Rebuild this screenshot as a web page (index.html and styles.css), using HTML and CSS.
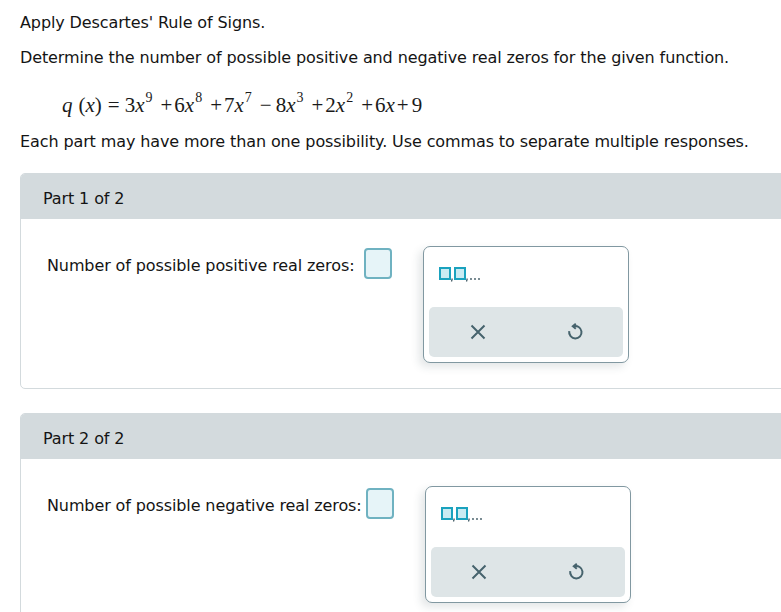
FILE: index.html
```html
<!DOCTYPE html>
<html>
<head>
<meta charset="utf-8">
<link rel="stylesheet" href="styles.css">
</head>
<body>
<main class="page">
  <p class="line l1">Apply Descartes' Rule of Signs.</p>
  <p class="line l2">Determine the number of possible positive and negative real zeros for the given function.</p>
  <div class="math"><span class="mi">q</span><span class="par">(</span><span class="mi">x</span><span class="par rp">)</span><span class="eq">=</span>3<span class="mi">x</span><sup>9</sup><span class="op">+</span>6<span class="mi">x</span><sup>8</sup><span class="op">+</span>7<span class="mi">x</span><sup>7</sup><span class="op minus">−</span>8<span class="mi">x</span><sup>3</sup><span class="op">+</span>2<span class="mi">x</span><sup>2</sup><span class="op">+</span>6<span class="mi">x</span><span class="op tight">+</span>9</div>
  <p class="line l3">Each part may have more than one possibility. Use commas to separate multiple responses.</p>

  <section class="card">
    <div class="card-head">Part 1 of 2</div>
    <div class="card-body">
      <span class="label label-pos">Number of possible positive real zeros:</span>
      <span class="answer"></span>
      <div class="pad">
        <div class="pad-top">
          <svg class="multi" width="44" height="16" viewBox="0 0 44 16">
            <rect x="2" y="2" width="10" height="11" fill="#c9ebf2" stroke="#1aa2be" stroke-width="2"/>
            <path d="M14.3 12.5 L13.5 15.5" stroke="#3b5560" stroke-width="1.2"/>
            <rect x="17" y="2" width="10" height="11" fill="#c9ebf2" stroke="#1aa2be" stroke-width="2"/>
            <path d="M29.3 12.5 L28.5 15.5" stroke="#3b5560" stroke-width="1.2"/>
            <circle cx="33" cy="13" r="0.9" fill="#3b5560"/>
            <circle cx="37" cy="13" r="0.9" fill="#3b5560"/>
            <circle cx="41" cy="13" r="0.9" fill="#3b5560"/>
          </svg>
        </div>
        <div class="toolbar">
          <span class="tool">
            <svg width="16" height="16" viewBox="0 0 16 16"><path d="M1.5 1.5 L14.5 14.5 M14.5 1.5 L1.5 14.5" stroke="#46636d" stroke-width="2" fill="none"/></svg>
          </span>
          <span class="tool">
            <svg width="18" height="18" viewBox="0 0 18 18"><path d="M7.5 3.3 A6.2 6.2 0 1 1 3.2 8.2" stroke="#46636d" stroke-width="2" fill="none"/><path d="M9.8 0.8 L6.8 3.3 L9.8 5.8" stroke="#46636d" stroke-width="2" fill="none" stroke-linejoin="miter"/></svg>
          </span>
        </div>
      </div>
    </div>
  </section>

  <section class="card card-2">
    <div class="card-head">Part 2 of 2</div>
    <div class="card-body">
      <span class="label label-neg">Number of possible negative real zeros:</span>
      <span class="answer"></span>
      <div class="pad">
        <div class="pad-top">
          <svg class="multi" width="44" height="16" viewBox="0 0 44 16">
            <rect x="2" y="2" width="10" height="11" fill="#c9ebf2" stroke="#1aa2be" stroke-width="2"/>
            <path d="M14.3 12.5 L13.5 15.5" stroke="#3b5560" stroke-width="1.2"/>
            <rect x="17" y="2" width="10" height="11" fill="#c9ebf2" stroke="#1aa2be" stroke-width="2"/>
            <path d="M29.3 12.5 L28.5 15.5" stroke="#3b5560" stroke-width="1.2"/>
            <circle cx="33" cy="13" r="0.9" fill="#3b5560"/>
            <circle cx="37" cy="13" r="0.9" fill="#3b5560"/>
            <circle cx="41" cy="13" r="0.9" fill="#3b5560"/>
          </svg>
        </div>
        <div class="toolbar">
          <span class="tool">
            <svg width="16" height="16" viewBox="0 0 16 16"><path d="M1.5 1.5 L14.5 14.5 M14.5 1.5 L1.5 14.5" stroke="#46636d" stroke-width="2" fill="none"/></svg>
          </span>
          <span class="tool">
            <svg width="18" height="18" viewBox="0 0 18 18"><path d="M7.5 3.3 A6.2 6.2 0 1 1 3.2 8.2" stroke="#46636d" stroke-width="2" fill="none"/><path d="M9.8 0.8 L6.8 3.3 L9.8 5.8" stroke="#46636d" stroke-width="2" fill="none" stroke-linejoin="miter"/></svg>
          </span>
        </div>
      </div>
    </div>
  </section>
</main>
</body>
</html>
```

FILE: styles.css
```css
html, body {
  margin: 0;
  padding: 0;
  background: #ffffff;
  overflow: hidden;
}
body {
  font-family: "DejaVu Sans", Verdana, sans-serif;
  font-size: 16px;
  letter-spacing: -0.11px;
  color: #141414;
}
.page {
  padding: 13px 0 0 20px;
  width: 800px;
}
.line {
  margin: 0;
  line-height: 20px;
}
.l2 { margin-top: 15px; }
.l3 { margin-top: 12px; }

.math {
  margin-top: 22px;
  height: 30px;
  line-height: 30px;
  padding-left: 42px;
  font-family: "Liberation Serif", "Times New Roman", serif;
  font-size: 21px;
  letter-spacing: 0;
  color: #1a1a1a;
  white-space: nowrap;
}
.math .mi { font-style: italic; }
.math .par { margin-left: 6px; }
.math .rp { margin-left: 0; }
.math .eq { margin: 0 5px 0 6px; }
.math sup {
  font-size: 14px;
  line-height: 0;
  vertical-align: 10px;
  margin-left: 1px;
}
.math .op { margin: 0 2px 0 8px; }
.math .minus { margin: 0 4px 0 8px; }
.math .tight { margin: 0 3px 0 2px; }

.card {
  margin-top: 21px;
  width: 780px;
  border: 1px solid #d3dadd;
  border-radius: 5px 0 0 5px;
  background: #fff;
}
.card-2 { margin-top: 24px; }
.card-head {
  background: #d3dadd;
  height: 45px;
  box-sizing: border-box;
  padding: 15px 22px 0 22px;
  line-height: 20px;
  border-radius: 4px 0 0 0;
}
.card-body {
  display: flex;
  align-items: flex-start;
  padding: 27px 0 25px 26px;
}
.label {
  margin-top: 10px;
  line-height: 20px;
  white-space: nowrap;
}
.label-pos { margin-right: 10px; }
.label-neg { margin-right: 4px; }
.answer {
  margin-top: 2px;
  width: 28px;
  height: 31px;
  box-sizing: border-box;
  border: 2px solid #6fb2c1;
  border-radius: 4px;
  background: #e6f4f8;
}
.pad {
  margin-left: 31px;
  width: 206px;
  height: 117px;
  box-sizing: border-box;
  border: 1px solid #8198a1;
  border-radius: 7px;
  padding: 5px;
  background: #fff;
  box-shadow: -4px 4px 8px rgba(40, 60, 70, 0.13);
  display: flex;
  flex-direction: column;
}
.pad-top {
  height: 55px;
  padding: 14px 0 0 9px;
  box-sizing: border-box;
}
.multi { display: block; }
.toolbar {
  display: flex;
  height: 50px;
  background: #dee5e7;
  border-radius: 5px;
}
.tool {
  flex: 1;
  display: flex;
  align-items: center;
  justify-content: center;
}
.tool svg { display: block; }
```
